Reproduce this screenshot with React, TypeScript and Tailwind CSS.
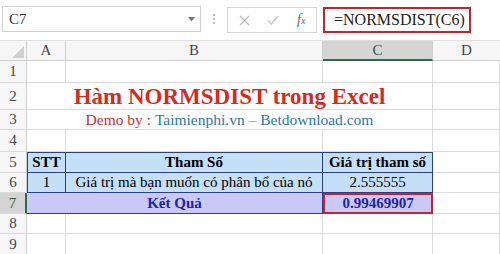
import React from 'react';

const cols = 'grid-cols-[27px_39px_257px_110px_67px]';

const App: React.FC = () => {
  const rowH = ['h-[22px]', 'h-[27px]', 'h-[20px]', 'h-[22px]', 'h-[21px]', 'h-[20px]', 'h-[21px]', 'h-[20px]', 'h-[21px]'];

  const rowHead = (n: number, selected = false) => (
    <div
      key={'r' + n}
      className={`${rowH[n - 1]} flex items-center justify-center text-[15px] border-b border-[#d9d9d9] ${
        selected ? 'bg-[#d4d4d4] text-[#1f5f3a] border-r-2 border-r-[#2e6b4a]' : 'bg-[#f6f6f6] text-[#444] border-r border-r-[#cfcfcf]'
      }`}
    >
      {n}
    </div>
  );

  const cell = 'border-r border-b border-[#dcdcdc]';

  return (
    <div className="w-[500px] h-[254px] overflow-hidden bg-white text-black leading-none font-['Liberation_Serif','Times_New_Roman',serif]">
      {/* formula bar */}
      <div className="h-[40px] flex items-start pt-[6px] pl-[2px]">
        <div className="w-[199px] h-[26px] border border-[#cfcfcf] flex items-center justify-between pl-[6px] pr-[5px] text-[15px] text-[#333]">
          <span>C7</span>
          <svg width="7" height="5" viewBox="0 0 7 5"><path d="M0 0h7L3.5 4.5z" fill="#777" /></svg>
        </div>
        <div className="w-[26px] h-[26px] flex flex-col items-center justify-center gap-[2px]">
          <span className="w-[2px] h-[2px] bg-[#bbb]" />
          <span className="w-[2px] h-[2px] bg-[#bbb]" />
          <span className="w-[2px] h-[2px] bg-[#bbb]" />
        </div>
        <div className="w-[90px] h-[26px] mt-[1px] border border-[#d6d6d6] flex items-center">
          <svg className="ml-[11px]" width="11" height="11" viewBox="0 0 11 11"><path d="M1 1l9 9M10 1l-9 9" stroke="#bdbdbd" strokeWidth="1.3" /></svg>
          <svg className="ml-[17px]" width="12" height="10" viewBox="0 0 12 10"><path d="M1 5.5l3.5 3.5L11 1" stroke="#c4c4c4" strokeWidth="1.3" fill="none" /></svg>
          <span className="ml-[18px] text-[14px] italic text-[#666]">f<span className="text-[10px]">x</span></span>
        </div>
        <div className="ml-[6px] w-[148px] h-[26px] mt-[1px] border-2 border-[#c8232c] flex items-center pl-[9px] text-[16px] text-[#222]">
          =NORMSDIST(C6)
        </div>
      </div>

      {/* sheet */}
      <div className={`grid ${cols} border-t border-[#e0e0e0]`}>
        {/* column headers */}
        <div className="h-[20px] bg-[#f6f6f6] border-r border-b border-[#cfcfcf] flex items-end justify-end p-[2px]">
          <svg width="12" height="12" viewBox="0 0 12 12"><path d="M12 0v12H0z" fill="#d0d0d0" /></svg>
        </div>
        <div className="h-[20px] bg-[#f6f6f6] border-r border-b border-[#cfcfcf] flex items-center justify-center text-[15px] text-[#444]">A</div>
        <div className="h-[20px] bg-[#f6f6f6] border-r border-b border-[#cfcfcf] flex items-center justify-center text-[15px] text-[#444]">B</div>
        <div className="h-[20px] bg-[#d5d5d5] border-r border-[#cfcfcf] border-b-2 border-b-[#2e6b4a] flex items-center justify-center text-[15px] text-[#1f5f3a]">C</div>
        <div className="h-[20px] bg-[#f6f6f6] border-b border-[#cfcfcf] flex items-center justify-center text-[15px] text-[#444]">D</div>

        {/* row 1 */}
        {rowHead(1)}
        <div className={cell} />
        <div className={cell} />
        <div className={cell} />
        <div className={cell} />

        {/* row 2 */}
        {rowHead(2)}
        <div className={`col-span-3 ${cell} flex items-center justify-center text-[23px] font-bold text-[#d52b1e] whitespace-nowrap`}>
          Hàm NORMSDIST trong Excel
        </div>
        <div className={cell} />

        {/* row 3 */}
        {rowHead(3)}
        <div className={`col-span-3 ${cell} flex items-center justify-center text-[15.5px] whitespace-nowrap`}>
          <span className="text-[#d0312d]">Demo by :&nbsp;</span>
          <span className="text-[#2f74b5]">Taimienphi.vn – Betdownload.com</span>
        </div>
        <div className={cell} />

        {/* row 4 */}
        {rowHead(4)}
        <div className={cell} />
        <div className={cell} />
        <div className={cell} />
        <div className={cell} />

        {/* row 5 */}
        {rowHead(5)}
        <div className="bg-[#c4dff6] border border-[#2c3f8c] flex items-center justify-center text-[15px] font-bold">STT</div>
        <div className="bg-[#c4dff6] border-y border-r border-[#2c3f8c] flex items-center justify-center text-[15px] font-bold">Tham Số</div>
        <div className="bg-[#c4dff6] border-y border-r border-[#2c3f8c] flex items-center justify-center text-[15px] font-bold">Giá trị tham số</div>
        <div className={cell} />

        {/* row 6 */}
        {rowHead(6)}
        <div className="bg-[#c4dff6] border-x border-b border-[#2c3f8c] flex items-center justify-center text-[15px]">1</div>
        <div className="bg-[#c4dff6] border-r border-b border-[#2c3f8c] flex items-center justify-center text-[15px] whitespace-nowrap">
          Giá trị mà bạn muốn có phân bổ của nó
        </div>
        <div className="bg-[#c4dff6] border-r border-b border-[#2c3f8c] flex items-center justify-center text-[15px]">2.555555</div>
        <div className={cell} />

        {/* row 7 */}
        {rowHead(7, true)}
        <div className="col-span-2 bg-[#c9c9f7] border-r border-b border-[#2c3f8c] flex items-center justify-center text-[15px] font-bold text-[#1f23a6]">
          Kết Quả
        </div>
        <div className="bg-[#c9c9f7] border-2 border-[#c8232c] flex items-center justify-center text-[15px] font-bold text-[#1f23a6]">
          0.99469907
        </div>
        <div className={cell} />

        {/* row 8 */}
        {rowHead(8)}
        <div className={cell} />
        <div className={cell} />
        <div className={cell} />
        <div className={cell} />

        {/* row 9 */}
        {rowHead(9)}
        <div className={cell} />
        <div className={cell} />
        <div className={cell} />
        <div className={cell} />
      </div>
    </div>
  );
};

export default App;
